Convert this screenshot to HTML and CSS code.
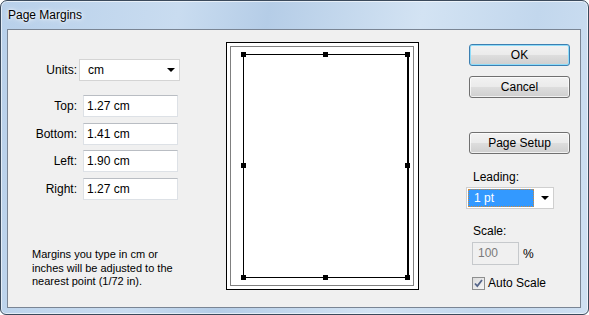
FILE: index.html
```html
<!DOCTYPE html>
<html lang="en">
<head>
    <meta charset="UTF-8">
    <title>Page Margins</title>
    <link rel="stylesheet" href="styles.css">
</head>
<body>
    <div class="window">
        <div class="titlebar">Page Margins</div>
        <div class="client">
            <div class="fields">
                <div class="units-row">
                    <span class="lbl">Units:</span>
                    <div class="combo units"><span>cm</span><i class="arrow"></i></div>
                </div>
                <div class="margin-rows">
                    <div class="row"><span class="lbl">Top:</span><div class="textbox">1.27 cm</div></div>
                    <div class="row"><span class="lbl">Bottom:</span><div class="textbox">1.41 cm</div></div>
                    <div class="row"><span class="lbl">Left:</span><div class="textbox">1.90 cm</div></div>
                    <div class="row"><span class="lbl">Right:</span><div class="textbox">1.27 cm</div></div>
                </div>
                <p class="note">Margins you type in cm or<br>inches will be adjusted to the<br>nearest point (1/72 in).</p>
            </div>

            <div class="preview">
                <svg width="193" height="248" viewBox="0 0 193 248">
                    <rect x="0.5" y="0.5" width="192" height="247" fill="#fff" stroke="#000"/>
                    <rect x="4.5" y="4.5" width="183" height="239" fill="none" stroke="#808080"/>
                    <rect x="17.5" y="12.5" width="164" height="223" fill="none" stroke="#000"/>
                    <line x1="182.5" y1="12" x2="182.5" y2="236" stroke="#000"/>
                    <g fill="#000">
                        <rect x="15" y="10" width="5" height="5"/>
                        <rect x="97" y="10" width="5" height="5"/>
                        <rect x="179" y="10" width="5" height="5"/>
                        <rect x="15" y="121" width="5" height="5"/>
                        <rect x="179" y="121" width="5" height="5"/>
                        <rect x="15" y="233" width="5" height="5"/>
                        <rect x="97" y="233" width="5" height="5"/>
                        <rect x="179" y="233" width="5" height="5"/>
                    </g>
                </svg>
            </div>

            <div class="actions">
                <button class="btn default">OK</button>
                <button class="btn cancel">Cancel</button>
                <button class="btn setup">Page Setup</button>
                <div class="side-label leading-label">Leading:</div>
                <div class="combo leading"><span class="sel">1 pt</span><i class="arrow"></i></div>
                <div class="side-label scale-label">Scale:</div>
                <div class="scale-row"><div class="textbox disabled">100</div><span>%</span></div>
                <div class="check">
                    <span class="box">
                        <svg width="11" height="11" viewBox="0 0 11 11"><path d="M2 5.5 L4.3 8 L9 2" fill="none" stroke="#55658a" stroke-width="1.8"/></svg>
                    </span>
                    <span>Auto Scale</span>
                </div>
            </div>
        </div>
    </div>
</body>
</html>
```

FILE: styles.css
```css
body {
    margin: 0;
    font-family: 'Liberation Sans', Arial, sans-serif;
    font-size: 12px;
    color: #000;
    background: #fff;
}
.window {
    box-sizing: border-box;
    width: 589px;
    height: 315px;
    border: 1px solid #3b4a5c;
    border-radius: 7px 7px 6px 6px;
    background: linear-gradient(100deg, #b8d0ea 0%, #c9dcf0 28%, #b5cde7 42%, #d3e3f3 66%, #c2d7ed 84%, #cfe0f2 100%);
    box-shadow: inset 0 0 0 1px rgba(255, 255, 255, 0.6);
}
.titlebar {
    height: 28px;
    line-height: 28px;
    padding-left: 7px;
    font-size: 12px;
    text-shadow: 0 0 6px #fff, 0 0 3px #fff;
}
.client {
    box-sizing: border-box;
    height: 279px;
    margin: 0 7px 0 6px;
    border: 1px solid #7a8594;
    background: #f0f0f0;
    display: flex;
    align-items: flex-start;
}

/* left column */
.fields {
    width: 218px;
    flex-shrink: 0;
}
.units-row, .row {
    display: flex;
    align-items: center;
}
.units-row {
    margin-top: 29px;
    gap: 2px;
}
.lbl {
    width: 69px;
    text-align: right;
}
.margin-rows {
    margin-top: 14px;
    display: flex;
    flex-direction: column;
    gap: 5.7px;
}
.row {
    gap: 6px;
}
.textbox {
    box-sizing: border-box;
    width: 95px;
    height: 22px;
    line-height: 20px;
    padding-left: 3px;
    background: #fff;
    border: 1px solid #dde1e6;
    border-top-color: #b9bdc3;
}
.combo {
    box-sizing: border-box;
    position: relative;
    height: 22px;
    background: #fff;
    border: 1px solid #d4d4d4;
}
.combo.units {
    width: 101px;
    line-height: 20px;
    padding-left: 8px;
}
.arrow {
    position: absolute;
    right: 4px;
    top: 8px;
    width: 0;
    height: 0;
    border-left: 4px solid transparent;
    border-right: 4px solid transparent;
    border-top: 4px solid #000;
}
.note {
    margin: 48px 0 0 24px;
    font-size: 11px;
    line-height: 13.5px;
}

/* page preview */
.preview {
    margin-top: 12px;
    width: 193px;
    height: 248px;
    flex-shrink: 0;
}
.preview svg {
    display: block;
}

/* right column */
.actions {
    margin-left: 47px;
    width: 104px;
    display: flex;
    flex-direction: column;
    align-items: flex-start;
}
.btn {
    box-sizing: border-box;
    width: 101px;
    height: 22px;
    margin-left: 3px;
    padding: 0;
    font-family: inherit;
    font-size: 12px;
    color: #000;
    border: 1px solid #707070;
    border-radius: 3px;
    background: linear-gradient(#f2f2f2 0%, #ebebeb 48%, #dddddd 52%, #cfcfcf 100%);
    box-shadow: inset 0 0 0 1px rgba(255, 255, 255, 0.7);
}
.btn.default {
    margin-top: 14px;
    border-color: #3c7fb1;
    box-shadow: inset 0 0 0 1px #8fdcf9;
}
.btn.cancel {
    margin-top: 10px;
}
.btn.setup {
    margin-top: 34px;
}
.side-label {
    padding-left: 7px;
    line-height: 14px;
}
.leading-label {
    margin-top: 16px;
}
.combo.leading {
    margin-top: 3px;
    width: 88px;
    padding: 1px;
    border-color: #cfcfcf;
}
.combo.leading .sel {
    box-sizing: border-box;
    display: block;
    width: 66px;
    height: 18px;
    line-height: 16px;
    padding-left: 5px;
    color: #fff;
    background: #3399ff;
    border: 1px dotted #d08a3a;
}
.scale-label {
    margin-top: 15px;
}
.scale-row {
    margin: 4px 0 0 6px;
    display: flex;
    align-items: center;
    gap: 4px;
}
.textbox.disabled {
    width: 47px;
    height: 23px;
    padding-left: 5px;
    background: #f0f0f0;
    color: #7a7a7a;
    border-color: #c6c9cc;
}
.check {
    margin: 11px 0 0 6px;
    display: flex;
    align-items: center;
    gap: 3px;
}
.box {
    box-sizing: border-box;
    width: 13px;
    height: 13px;
    border: 1px solid #8e8f8f;
    background: linear-gradient(135deg, #dcdcdc, #f6f6f6);
    display: flex;
    align-items: center;
    justify-content: center;
}
.box svg {
    display: block;
}
```
